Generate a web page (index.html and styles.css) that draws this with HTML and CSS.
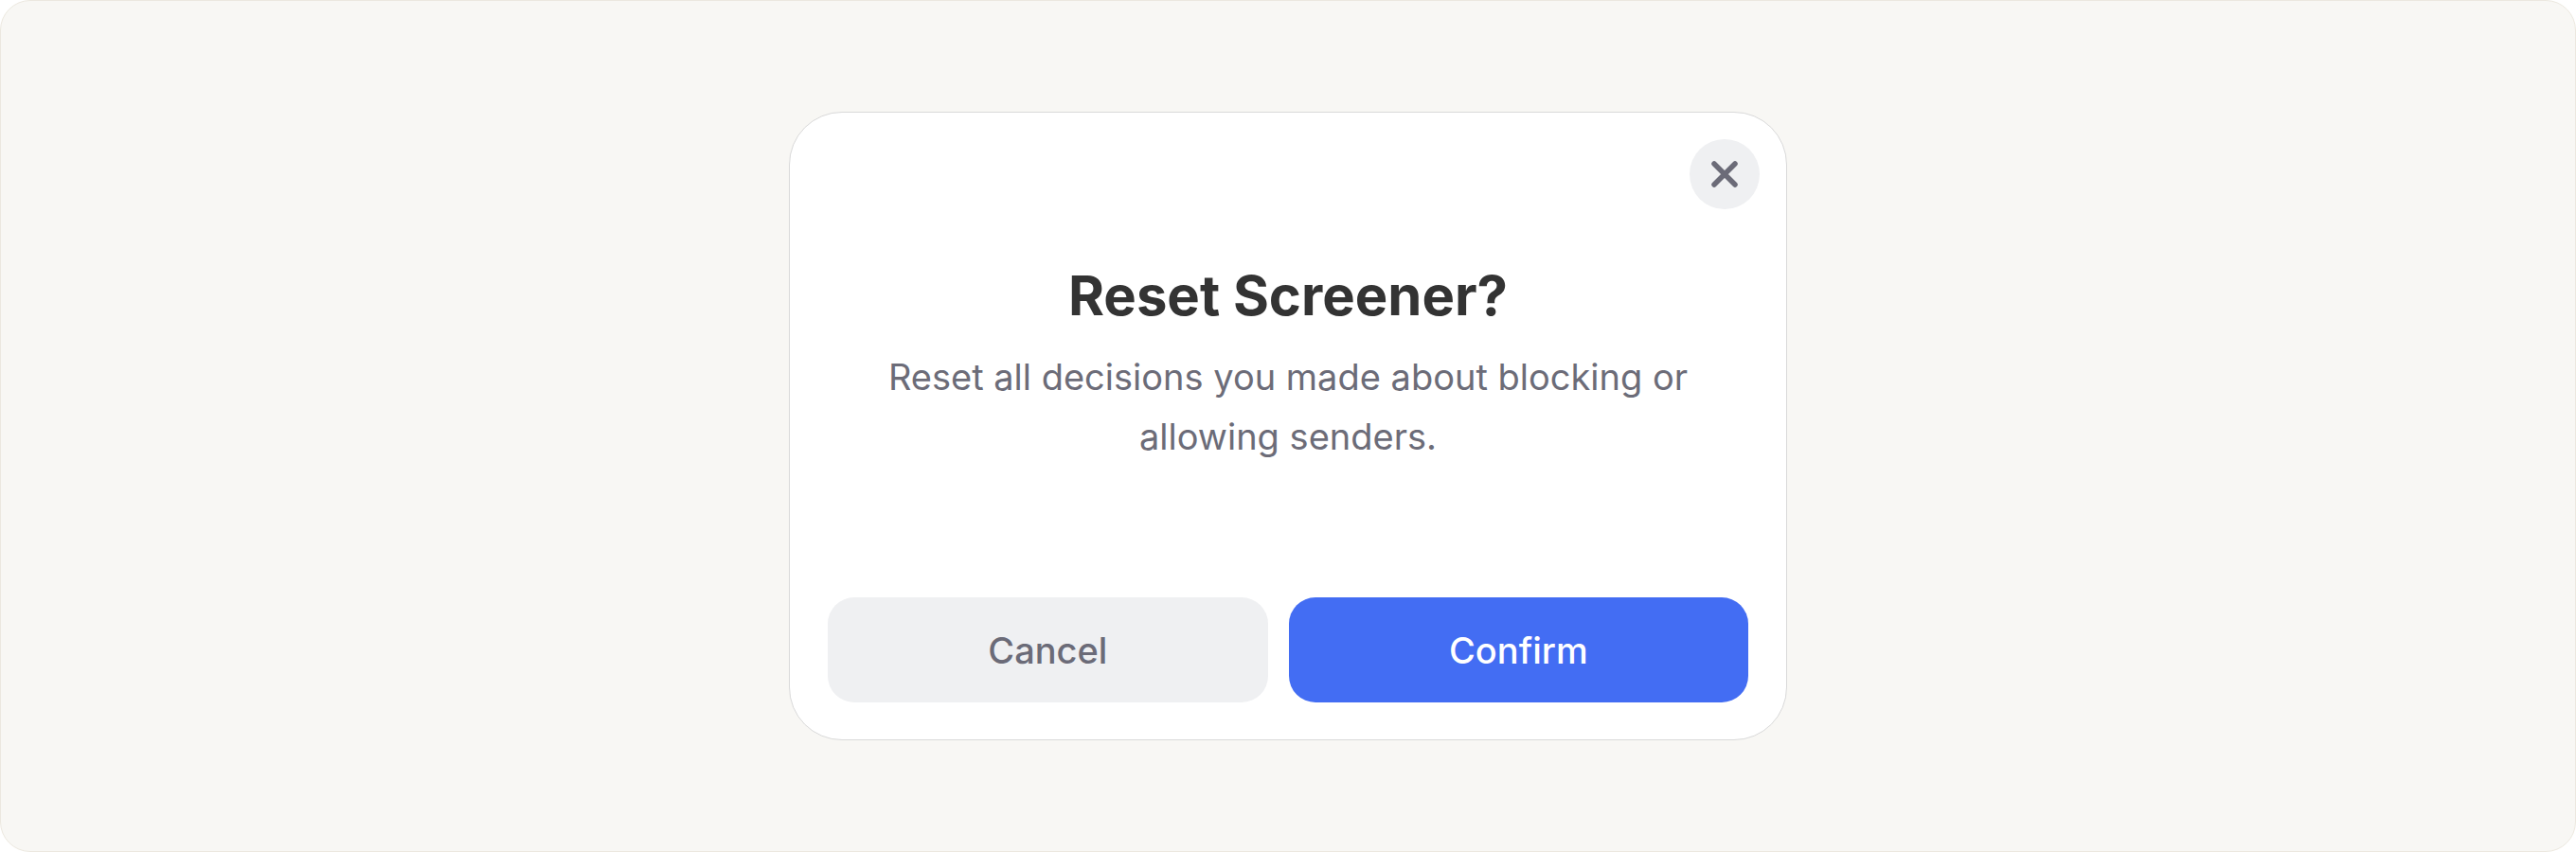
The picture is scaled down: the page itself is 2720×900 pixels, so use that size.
FILE: index.html
```html
<!DOCTYPE html>
<html>

<head>
  <link rel="stylesheet" href="styles.css">
</head>

<body>
  <div class="frame">
    <div class="dialog">
      <button class="close-btn" type="button" aria-label="Close">
        <svg width="32" height="32" viewBox="0 0 32 32">
          <path d="M5 5 L27 27 M27 5 L5 27" stroke="#6b6b78" stroke-width="5.5" stroke-linecap="round" fill="none"/>
        </svg>
      </button>

      <h1 class="dialog-title">Reset Screener?</h1>
      <p class="dialog-text">Reset all decisions you made about blocking or allowing senders.</p>

      <div class="actions">
        <button class="btn btn-cancel" type="button">Cancel</button>
        <button class="btn btn-confirm" type="button">Confirm</button>
      </div>
    </div>
  </div>
</body>

</html>
```

FILE: styles.css
```css
* {
  margin: 0;
  padding: 0;
  box-sizing: border-box;
}

body {
  font-family: Inter, "Noto Sans", sans-serif;
  background-color: #ffffff;
}

.frame {
  width: 2720px;
  height: 900px;
  display: flex;
  justify-content: center;
  align-items: center;
  border: 1px solid #ece8df;
  border-radius: 32px;
  background-color: #f8f7f4;
}

.dialog {
  position: relative;
  width: 1054px;
  height: 664px;
  padding: 160px 40px 39px;
  display: flex;
  flex-direction: column;
  align-items: center;
  border: 1px solid #d9d9d9;
  border-radius: 56px;
  background-color: #ffffff;
}

.close-btn {
  position: absolute;
  top: 28px;
  right: 28px;
  width: 74px;
  height: 74px;
  display: flex;
  justify-content: center;
  align-items: center;
  border: none;
  border-radius: 50%;
  background-color: #eff0f2;
}

.dialog-title {
  font-size: 58px;
  font-weight: 700;
  line-height: 67px;
  color: #333333;
}

.dialog-text {
  margin-top: 21px;
  max-width: 940px;
  font-size: 38px;
  line-height: 63px;
  text-align: center;
  color: #6c6c78;
}

.actions {
  margin-top: auto;
  width: 100%;
  display: flex;
  gap: 22px;
}

.btn {
  flex: 1 1 auto;
  height: 111px;
  font-family: Inter, "Noto Sans", sans-serif;
  font-size: 38px;
  font-weight: 500;
  border: none;
  border-radius: 28px;
}

.btn-cancel {
  color: #6b6b78;
  background-color: #eff0f2;
}

.btn-confirm {
  color: #ffffff;
  background-color: #436df3;
}
```
